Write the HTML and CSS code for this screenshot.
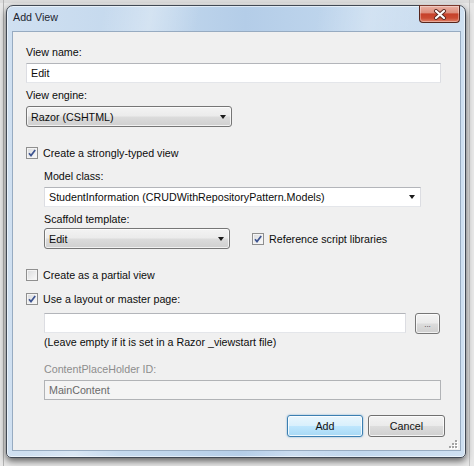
FILE: index.html
```html
<!DOCTYPE html>
<html>
<head>
<meta charset="utf-8">
<title>Add View</title>
<link rel="stylesheet" href="styles.css">
</head>
<body>
<div class="desktop">
  <div class="window">
    <div class="titlebar">
      <span class="title">Add View</span>
      <div class="close">
        <svg width="14" height="11" viewBox="0 0 14 11">
          <path d="M3 2 L11 9 M11 2 L3 9" stroke="#5b2a22" stroke-width="4" stroke-linecap="round" fill="none"/>
          <path d="M3 2 L11 9 M11 2 L3 9" stroke="#ffffff" stroke-width="2.2" stroke-linecap="round" fill="none"/>
        </svg>
      </div>
    </div>
    <div class="client">
      <div class="form">
        <div class="label">View name:</div>
        <div class="textbox wide">Edit</div>

        <div class="label gap">View engine:</div>
        <div class="combo engine"><span>Razor (CSHTML)</span><i class="arrow"></i></div>

        <div class="check section">
          <span class="box"><svg width="10" height="10" viewBox="0 0 10 10"><path d="M2 5.2 L4 7.6 L8.2 2" stroke="#3d5490" stroke-width="1.7" fill="none"/></svg></span>
          <span>Create a strongly-typed view</span>
        </div>

        <div class="indent">
          <div class="label model">Model class:</div>
          <div class="textbox model-combo"><span>StudentInformation (CRUDWithRepositoryPattern.Models)</span><i class="arrow"></i></div>

          <div class="label gap tight">Scaffold template:</div>
          <div class="row">
            <div class="combo scaffold"><span>Edit</span><i class="arrow"></i></div>
            <div class="check">
              <span class="box"><svg width="10" height="10" viewBox="0 0 10 10"><path d="M2 5.2 L4 7.6 L8.2 2" stroke="#3d5490" stroke-width="1.7" fill="none"/></svg></span>
              <span>Reference script libraries</span>
            </div>
          </div>
        </div>

        <div class="check section">
          <span class="box"></span>
          <span>Create as a partial view</span>
        </div>
        <div class="check next">
          <span class="box"><svg width="10" height="10" viewBox="0 0 10 10"><path d="M2 5.2 L4 7.6 L8.2 2" stroke="#3d5490" stroke-width="1.7" fill="none"/></svg></span>
          <span>Use a layout or master page:</span>
        </div>

        <div class="indent">
          <div class="row layout-row">
            <div class="textbox layout-path"></div>
            <div class="browse">...</div>
          </div>
          <div class="hint">(Leave empty if it is set in a Razor _viewstart file)</div>
          <div class="label disabled placeholder">ContentPlaceHolder ID:</div>
          <div class="textbox disabled-box">MainContent</div>
        </div>

        <div class="actions">
          <div class="btn default">Add</div>
          <div class="btn cancel">Cancel</div>
        </div>
      </div>
      <svg class="grip" width="9" height="9" viewBox="0 0 9 9">
        <g fill="#ffffff">
          <rect x="7" y="1" width="2" height="2"/><rect x="7" y="4" width="2" height="2"/><rect x="4" y="4" width="2" height="2"/>
          <rect x="7" y="7" width="2" height="2"/><rect x="4" y="7" width="2" height="2"/><rect x="1" y="7" width="2" height="2"/>
        </g>
        <g fill="#a3a3a3">
          <rect x="6" y="0" width="2" height="2"/><rect x="6" y="3" width="2" height="2"/><rect x="3" y="3" width="2" height="2"/>
          <rect x="6" y="6" width="2" height="2"/><rect x="3" y="6" width="2" height="2"/><rect x="0" y="6" width="2" height="2"/>
        </g>
      </svg>
    </div>
  </div>
</div>
</body>
</html>
```

FILE: styles.css
```css
* { box-sizing: border-box; }

html, body {
  margin: 0;
  padding: 0;
}

body {
  width: 474px;
  height: 466px;
  overflow: hidden;
  font-family: "Liberation Sans", Arial, sans-serif;
  font-size: 10.7px;
  color: #0c0c0c;
  background: #e6e6e6;
}

.desktop {
  height: 466px;
  padding: 5px 0 0 6px;
  background:
    linear-gradient(to right, transparent 3px, #b4b4b4 3px, #b4b4b4 4px, transparent 4px),
    linear-gradient(to right, transparent 469px, #c4c4c4 469px, #c4c4c4 470px, transparent 470px),
    linear-gradient(#dcdcdc, #dcdcdc 3px, #e8e8e8 3px);
}

.window {
  width: 460px;
  height: 453px;
  border: 1px solid #414954;
  border-radius: 7px 7px 5px 5px;
  padding: 0 4px 6px 5px;
  display: flex;
  flex-direction: column;
  background:
    linear-gradient(100deg, rgba(255,255,255,0) 18%, rgba(255,255,255,.3) 27%, rgba(255,255,255,0) 36%, rgba(255,255,255,0) 58%, rgba(255,255,255,.25) 68%, rgba(255,255,255,0) 80%),
    linear-gradient(to right, #d0e0f1, #c0d6ec 35%, #b4cde8 52%, #c2d8ee 78%, #cfe0f1);
  box-shadow: inset 0 0 0 1px rgba(255,255,255,.55), 0 3px 7px rgba(0,0,0,.6);
}

.titlebar {
  height: 25px;
  display: flex;
  align-items: flex-start;
  flex-shrink: 0;
}

.title {
  margin: 4px 0 0 1px;
  line-height: 15px;
  color: #1e2630;
}

.close {
  margin: -1px 1px 0 auto;
  width: 41px;
  height: 18px;
  border: 1px solid #55251c;
  border-top-color: #7a3a2e;
  border-radius: 0 0 4px 4px;
  display: flex;
  align-items: center;
  justify-content: center;
  background: linear-gradient(#eab0a2 0%, #dd8f7d 42%, #c6412a 50%, #cb4b32 75%, #e0836a 100%);
  box-shadow: inset 0 0 0 1px rgba(255,255,255,.35);
}

.client {
  flex: 1;
  position: relative;
  border: 1px solid #97abc1;
  background: #f0f0f0;
}

.form {
  padding: 13px 0 0 13px;
  display: flex;
  flex-direction: column;
  align-items: flex-start;
}

.label {
  height: 15px;
  line-height: 15px;
  margin-bottom: 3px;
  white-space: nowrap;
}
.label.gap { margin-top: 5px; }
.label.model { margin-top: 9px; }
.label.tight { margin-bottom: 1px; }
.label.placeholder { margin-top: 12px; }
.label.disabled { color: #8d8d8d; }

.textbox {
  height: 20px;
  border: 1px solid;
  border-color: #b3b5ba #dcdde2 #e4e6ea #dcdde2;
  background: #ffffff;
  padding: 0 4px;
  line-height: 18px;
  display: flex;
  align-items: center;
  white-space: nowrap;
}
.textbox.wide { width: 415px; }

.model-combo {
  width: 377px;
  justify-content: space-between;
  padding-right: 5px;
}

.combo {
  height: 21px;
  border: 1px solid #767676;
  border-radius: 3px;
  padding: 0 5px 0 4px;
  display: flex;
  align-items: center;
  justify-content: space-between;
  background: linear-gradient(#f3f3f3 0%, #ebebeb 48%, #dcdcdc 52%, #cfcfcf 100%);
  box-shadow: inset 0 0 0 1px rgba(255,255,255,.7);
}
.combo.engine { width: 206px; }
.combo.scaffold { width: 186px; }

.arrow {
  width: 0;
  height: 0;
  border-left: 3.5px solid transparent;
  border-right: 3.5px solid transparent;
  border-top: 4px solid #1a1a1a;
}

.check {
  height: 15px;
  display: flex;
  align-items: center;
  gap: 5px;
  white-space: nowrap;
}
.check.section { margin-top: 18px; }
.check.next { margin-top: 9px; }

.box {
  width: 12px;
  height: 12px;
  border: 1px solid #8f8f8f;
  background: linear-gradient(135deg, #d9dadc, #fbfbfb);
  box-shadow: inset 0 0 0 1px #f4f4f4;
  display: flex;
  align-items: center;
  justify-content: center;
}

.indent {
  padding-left: 18px;
  display: flex;
  flex-direction: column;
  align-items: flex-start;
}

.row {
  display: flex;
  align-items: center;
  gap: 22px;
}
.row.layout-row {
  margin-top: 7px;
  gap: 9px;
  align-items: flex-start;
}

.layout-path { width: 362px; }

.browse {
  width: 25px;
  height: 21px;
  border: 1px solid #767676;
  border-radius: 3px;
  display: flex;
  align-items: flex-end;
  justify-content: center;
  padding-bottom: 4px;
  font-size: 8px;
  line-height: 8px;
  color: #333;
  background: linear-gradient(#f3f3f3 0%, #ebebeb 48%, #dcdcdc 52%, #cfcfcf 100%);
  box-shadow: inset 0 0 0 1px rgba(255,255,255,.7);
}

.hint {
  margin-top: 1px;
  height: 15px;
  line-height: 15px;
  white-space: nowrap;
}

.disabled-box {
  width: 397px;
  border: 1px solid #b1b3b6;
  background: #f4f4f4;
  color: #6a6a6a;
}

.actions {
  align-self: stretch;
  margin-top: 15px;
  padding-right: 15px;
  display: flex;
  justify-content: flex-end;
  gap: 5px;
}

.btn {
  height: 22px;
  border: 1px solid #707070;
  border-radius: 3px;
  display: flex;
  align-items: center;
  justify-content: center;
  background: linear-gradient(#f3f3f3 0%, #ebebeb 48%, #dddddd 52%, #cfcfcf 100%);
  box-shadow: inset 0 0 0 1px rgba(255,255,255,.75);
  color: #111;
}
.btn.default {
  width: 76px;
  border-color: #3c7fb1;
  background: linear-gradient(#eaf6fd 0%, #d9f0fc 48%, #bee6fd 52%, #a7d9f5 100%);
  box-shadow: inset 0 0 0 1px rgba(255,255,255,.8), 0 0 2px rgba(60,140,200,.7);
}
.btn.cancel { width: 77px; }

.grip {
  position: absolute;
  right: 2px;
  bottom: 1px;
}
```
